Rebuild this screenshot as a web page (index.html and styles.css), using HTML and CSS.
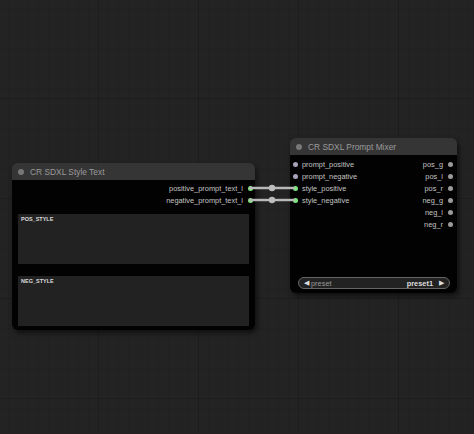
FILE: index.html
```html
<!DOCTYPE html>
<html>
<head>
<meta charset="utf-8">
<link rel="stylesheet" href="styles.css">
</head>
<body>
<div class="canvas">
  <svg class="links" width="474" height="434" viewBox="0 0 474 434">
    <path d="M249 188 L295 188" class="link"/>
    <path d="M249 200 L295 200" class="link"/>
    <circle cx="272" cy="188" r="3.2" class="mid"/>
    <circle cx="272" cy="200" r="3.2" class="mid"/>
  </svg>

  <div class="node node-style">
    <div class="title"><span class="tdot"></span>CR SDXL Style Text</div>
    <div class="body">
      <div class="outputs">
        <div class="orow"><span>positive_prompt_text_l</span><i class="dot green"></i></div>
        <div class="orow"><span>negative_prompt_text_l</span><i class="dot green"></i></div>
      </div>
      <div class="textbox"><span>POS_STYLE</span></div>
      <div class="textbox"><span>NEG_STYLE</span></div>
    </div>
  </div>

  <div class="node node-mixer">
    <div class="title"><span class="tdot"></span>CR SDXL Prompt Mixer</div>
    <div class="body">
      <div class="slots">
        <div class="ins">
          <div class="irow"><i class="dot lav"></i><span>prompt_positive</span></div>
          <div class="irow"><i class="dot lav"></i><span>prompt_negative</span></div>
          <div class="irow"><i class="dot green"></i><span>style_positive</span></div>
          <div class="irow"><i class="dot green"></i><span>style_negative</span></div>
        </div>
        <div class="outs">
          <div class="orow"><span>pos_g</span><i class="dot gray"></i></div>
          <div class="orow"><span>pos_l</span><i class="dot gray"></i></div>
          <div class="orow"><span>pos_r</span><i class="dot gray"></i></div>
          <div class="orow"><span>neg_g</span><i class="dot gray"></i></div>
          <div class="orow"><span>neg_l</span><i class="dot gray"></i></div>
          <div class="orow"><span>neg_r</span><i class="dot gray"></i></div>
        </div>
      </div>
      <div class="combo">
        <span class="arrow">&#9664;</span>
        <span class="clabel">preset</span>
        <span class="cval">preset1</span>
        <span class="arrow">&#9654;</span>
      </div>
    </div>
  </div>
</div>
</body>
</html>
```

FILE: styles.css
```css
html, body {
  margin: 0;
  padding: 0;
  background: #222;
}
.canvas {
  position: relative;
  width: 474px;
  height: 434px;
  overflow: hidden;
  background-color: #232323;
  background-image:
    linear-gradient(to right, rgba(0,0,0,0.13) 1px, transparent 1px),
    linear-gradient(to bottom, rgba(0,0,0,0.13) 1px, transparent 1px),
    linear-gradient(to right, rgba(0,0,0,0.06) 1px, transparent 1px),
    linear-gradient(to bottom, rgba(0,0,0,0.06) 1px, transparent 1px);
  background-size: 100px 100px, 100px 100px, 10px 10px, 10px 10px;
  background-position: -2px -2px;
  font-family: Arial, "Liberation Sans", sans-serif;
}
.links {
  position: absolute;
  left: 0;
  top: 0;
  z-index: 2;
}
.link {
  stroke: #b8b8b8;
  stroke-width: 2.4;
  fill: none;
}
.mid {
  fill: #bdbdbd;
}
.node {
  position: absolute;
  display: flex;
  flex-direction: column;
  border-radius: 6px;
  box-shadow: 2px 3px 5px rgba(0,0,0,0.55);
  z-index: 1;
}
.node-style {
  left: 12px;
  top: 163px;
  width: 243px;
}
.node-mixer {
  left: 290px;
  top: 138px;
  width: 167px;
}
.title {
  height: 17px;
  background: #353535;
  border-radius: 6px 6px 0 0;
  color: #9a9a9a;
  font-size: 8.4px;
  display: flex;
  align-items: center;
  padding-left: 6px;
  box-sizing: border-box;
}
.tdot {
  width: 6px;
  height: 6px;
  border-radius: 50%;
  background: #777;
  margin-right: 6px;
}
.body {
  background: #020202;
  border-radius: 0 0 6px 6px;
  display: flex;
  flex-direction: column;
}
.node-style .body {
  height: 150px;
  padding: 2px 6px 4px 6px;
  box-sizing: border-box;
}
.outputs {
  display: flex;
  flex-direction: column;
  height: 30px;
}
.orow {
  height: 12px;
  display: flex;
  align-items: center;
  justify-content: flex-end;
  color: #c4c4c4;
  font-size: 7.4px;
  gap: 5px;
}
.node-style .orow {
  margin-right: -4px;
}
.irow {
  height: 12px;
  display: flex;
  align-items: center;
  color: #c4c4c4;
  font-size: 7.4px;
  gap: 4px;
}
.dot {
  display: block;
  width: 5px;
  height: 5px;
  border-radius: 50%;
}
.green { background: #7be87b; }
.lav { background: #a8a2b8; }
.gray { background: #9a9a9a; }
.textbox {
  height: 50px;
  background: #222;
  margin-top: 12px;
  padding: 2px 3px;
  box-sizing: border-box;
  color: #ddd;
  font-size: 5.5px;
  font-weight: bold;
}
.outputs + .textbox {
  margin-top: 2px;
}
.node-mixer .body {
  height: 138px;
  padding: 3px 4px 2px 3px;
  box-sizing: border-box;
}
.slots {
  display: flex;
  justify-content: space-between;
  flex: 1;
}
.ins, .outs {
  display: flex;
  flex-direction: column;
}
.combo {
  height: 12px;
  margin: 0 3px 2px 5px;
  border: 1px solid #666;
  border-radius: 7px;
  background: #222;
  display: flex;
  align-items: center;
  padding: 0 5px;
  box-sizing: border-box;
  font-size: 7.4px;
}
.arrow {
  color: #ddd;
  font-size: 7px;
}
.clabel {
  color: #999;
  margin-left: 2px;
  flex: 1;
}
.cval {
  color: #ddd;
  font-weight: bold;
  margin-right: 6px;
}
```
